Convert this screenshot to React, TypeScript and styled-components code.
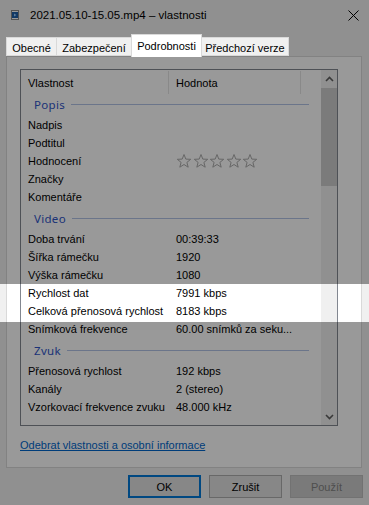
import { FC } from 'react';
import styled, { createGlobalStyle } from 'styled-components';

const GlobalStyle = createGlobalStyle`
  html, body {
    margin: 0;
    padding: 0;
    background: #f0f0f0;
  }
  body {
    font-family: 'Liberation Sans', Arial, sans-serif;
    font-size: 11px;
    color: #000;
  }
`;

const STWindow = styled.div`
  position: relative;
  width: 369px;
  height: 505px;
  background: #f0f0f0;
  display: flex;
  flex-direction: column;
  overflow: hidden;
`;

const STTitleBar = styled.div`
  height: 30px;
  display: flex;
  align-items: center;
  padding-left: 11px;
  flex-shrink: 0;
`;

const STTitle = styled.div`
  margin-left: 11px;
  font-size: 11.5px;
  flex: 1;
  white-space: nowrap;
`;

const STClose = styled.div`
  width: 30px;
  height: 30px;
  display: flex;
  align-items: center;
  justify-content: center;
  margin-right: 1px;
`;

const STTabStrip = styled.div`
  height: 26px;
  display: flex;
  align-items: flex-end;
  padding-left: 6px;
  position: relative;
  z-index: 1;
`;

const STTab = styled.div<{ $active?: boolean; $w: number }>`
  width: ${(p) => p.$w}px;
  height: ${(p) => (p.$active ? 23 : 19)}px;
  box-sizing: border-box;
  border: 1px solid #d9d9d9;
  border-bottom: ${(p) => (p.$active ? 'none' : '1px solid #d9d9d9')};
  background: ${(p) => (p.$active ? '#fff' : '#f0f0f0')};
  margin-left: -1px;
  margin-bottom: ${(p) => (p.$active ? '-1px' : '0')};
  display: flex;
  align-items: center;
  justify-content: center;
  padding-top: ${(p) => (p.$active ? '0' : '2px')};
  white-space: nowrap;
  &:first-child {
    margin-left: 0;
  }
`;

const STPanel = styled.div`
  margin: 0 7px 0 6px;
  height: 412px;
  box-sizing: border-box;
  border: 1px solid #d9d9d9;
  background: #fff;
  padding: 12px 0 0 13px;
  display: flex;
  flex-direction: column;
`;

const STListView = styled.div`
  width: 318px;
  height: 357px;
  box-sizing: border-box;
  border: 1px solid #828790;
  display: flex;
  background: #fff;
`;

const STListContent = styled.div`
  width: 300px;
  overflow: hidden;
`;

const STHeader = styled.div`
  height: 22px;
  display: flex;
  padding-top: 2px;
  box-sizing: border-box;
`;

const STHeaderCell = styled.div<{ $w: number }>`
  width: ${(p) => p.$w}px;
  box-sizing: border-box;
  padding-left: 7px;
  border-right: 1px solid #e5e5e5;
  display: flex;
  align-items: center;
  height: 23px;
  margin-top: -1px;
`;

const STGroupRow = styled.div`
  height: 24px;
  display: flex;
  align-items: center;
  padding: 0 12px 0 13px;
  gap: 6px;
`;

const STGroupLabel = styled.span`
  font-family: 'Noto Sans', 'Liberation Sans', sans-serif;
  font-size: 11.5px;
  letter-spacing: 0.3px;
  color: #2f55c8;
`;

const STGroupLine = styled.div`
  flex: 1;
  height: 1px;
  background: #b3c3e6;
`;

const STRow = styled.div`
  height: 18px;
  display: grid;
  grid-template-columns: 148px 132px;
  align-items: center;
`;

const STCell = styled.div`
  padding-left: 7px;
  white-space: nowrap;
  overflow: hidden;
`;

const STStars = styled.div`
  display: flex;
  gap: 0.5px;
  padding-left: 7px;
  height: 16px;
`;

const STScrollBar = styled.div`
  width: 16px;
  background: #f0f0f0;
  display: flex;
  flex-direction: column;
`;

const STArrow = styled.div`
  height: 17px;
  display: flex;
  align-items: center;
  justify-content: center;
`;

const STThumb = styled.div`
  height: 98px;
  margin: 1px 0 0;
  background: #cdcdcd;
`;

const STTrack = styled.div`
  flex: 1;
`;

const STLink = styled.a`
  margin-top: 12px;
  line-height: 14px;
  color: #0066cc;
  text-decoration: underline;
  align-self: flex-start;
`;

const STButtonRow = styled.div`
  display: flex;
  justify-content: flex-end;
  gap: 8px;
  padding: 7px 6px 0 0;
`;

const STButton = styled.div<{ $default?: boolean; $disabled?: boolean }>`
  width: 73px;
  height: 23px;
  box-sizing: border-box;
  display: flex;
  align-items: center;
  justify-content: center;
  background: ${(p) => (p.$disabled ? '#cccccc' : '#e1e1e1')};
  border: ${(p) =>
    p.$default ? '2px solid #0078d7' : p.$disabled ? '1px solid #bfbfbf' : '1px solid #adadad'};
  color: ${(p) => (p.$disabled ? '#838383' : '#000')};
`;

const STOverlay = styled.div`
  position: absolute;
  inset: 0;
  display: flex;
  flex-direction: column;
  pointer-events: none;
`;

const STShade = styled.div<{ $h?: number }>`
  background: rgba(0, 0, 0, 0.4);
  ${(p) => (p.$h ? `height: ${p.$h}px;` : 'flex: 1;')}
`;

const STSpot = styled.div`
  height: 38px;
`;

const Star: FC = () => (
  <svg width="16" height="16" viewBox="0 0 16 16">
    <polygon
      points="8,1.5 9.8,6.1 14.7,6.3 10.9,9.4 12.2,14.2 8,11.5 3.8,14.2 5.1,9.4 1.3,6.3 6.2,6.1"
      fill="none"
      stroke="#ababab"
      strokeWidth="1"
      strokeLinejoin="round"
    />
  </svg>
);

const FileIcon: FC = () => (
  <svg width="8" height="10" viewBox="0 0 8 10">
    <rect x="0.5" y="0.5" width="7" height="9" fill="#fff" stroke="#8a8a8a" />
    <rect x="1" y="2" width="6" height="6" fill="#1f5fa8" />
    <polygon points="3,3.5 5.5,5 3,6.5" fill="#9fd0ff" />
  </svg>
);

const Chevron: FC<{ up?: boolean }> = ({ up }) => (
  <svg width="9" height="6" viewBox="0 0 9 6">
    <polyline
      points={up ? '1,5 4.5,1.5 8,5' : '1,1 4.5,4.5 8,1'}
      fill="none"
      stroke="#606060"
      strokeWidth="1.6"
    />
  </svg>
);

type Group = { title: string; rows: [string, string][] };

const groups: Group[] = [
  {
    title: 'Popis',
    rows: [
      ['Nadpis', ''],
      ['Podtitul', ''],
      ['Hodnocení', '*'],
      ['Značky', ''],
      ['Komentáře', ''],
    ],
  },
  {
    title: 'Video',
    rows: [
      ['Doba trvání', '00:39:33'],
      ['Šířka rámečku', '1920'],
      ['Výška rámečku', '1080'],
      ['Rychlost dat', '7991 kbps'],
      ['Celková přenosová rychlost', '8183 kbps'],
      ['Snímková frekvence', '60.00 snímků za seku...'],
    ],
  },
  {
    title: 'Zvuk',
    rows: [
      ['Přenosová rychlost', '192 kbps'],
      ['Kanály', '2 (stereo)'],
      ['Vzorkovací frekvence zvuku', '48.000 kHz'],
    ],
  },
  { title: 'Médium', rows: [] },
];

export default function App() {
  return (
    <>
      <GlobalStyle />
      <STWindow>
        <STTitleBar>
          <FileIcon />
          <STTitle>2021.05.10-15.05.mp4 – vlastnosti</STTitle>
          <STClose>
            <svg width="11" height="11" viewBox="0 0 11 11">
              <path d="M0.5 0.5 L10.5 10.5 M10.5 0.5 L0.5 10.5" stroke="#000" strokeWidth="1" />
            </svg>
          </STClose>
        </STTitleBar>

        <STTabStrip>
          <STTab $w={51}>Obecné</STTab>
          <STTab $w={76}>Zabezpečení</STTab>
          <STTab $w={71} $active>
            Podrobnosti
          </STTab>
          <STTab $w={88}>Předchozí verze</STTab>
        </STTabStrip>

        <STPanel>
          <STListView>
            <STListContent>
              <STHeader>
                <STHeaderCell $w={148}>Vlastnost</STHeaderCell>
                <STHeaderCell $w={132}>Hodnota</STHeaderCell>
              </STHeader>
              {groups.map((g) => (
                <div key={g.title}>
                  <STGroupRow>
                    <STGroupLabel>{g.title}</STGroupLabel>
                    <STGroupLine />
                  </STGroupRow>
                  {g.rows.map(([name, value]) => (
                    <STRow key={name}>
                      <STCell>{name}</STCell>
                      {value === '*' ? (
                        <STStars>
                          {[0, 1, 2, 3, 4].map((i) => (
                            <Star key={i} />
                          ))}
                        </STStars>
                      ) : (
                        <STCell>{value}</STCell>
                      )}
                    </STRow>
                  ))}
                </div>
              ))}
            </STListContent>
            <STScrollBar>
              <STArrow>
                <Chevron up />
              </STArrow>
              <STThumb />
              <STTrack />
              <STArrow>
                <Chevron />
              </STArrow>
            </STScrollBar>
          </STListView>
          <STLink>Odebrat vlastnosti a osobní informace</STLink>
        </STPanel>

        <STButtonRow>
          <STButton $default>OK</STButton>
          <STButton>Zrušit</STButton>
          <STButton $disabled>Použít</STButton>
        </STButtonRow>

        <STOverlay>
          <STShade $h={284} />
          <STSpot />
          <STShade />
        </STOverlay>
      </STWindow>
    </>
  );
}
